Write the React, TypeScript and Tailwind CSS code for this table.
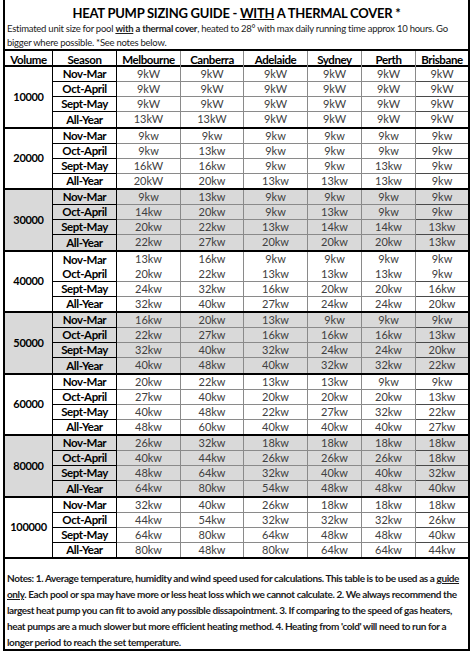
const cities = ['Melbourne', 'Canberra', 'Adelaide', 'Sydney', 'Perth', 'Brisbane'];
const seasons = ['Nov-Mar', 'Oct-April', 'Sept-May', 'All-Year'];

type Group = {
  volume: string;
  shaded: boolean;
  rows: string[][];
  // rows that have no line under them
  noLine?: number[];
};

const groups: Group[] = [
  {
    volume: '10000',
    shaded: false,
    rows: [
      ['9kW', '9kW', '9kW', '9kW', '9kW', '9kW'],
      ['9kW', '9kW', '9kW', '9kW', '9kW', '9kW'],
      ['9kW', '9kW', '9kW', '9kW', '9kW', '9kW'],
      ['13kW', '13kW', '9kW', '9kW', '9kW', '9kW'],
    ],
  },
  {
    volume: '20000',
    shaded: false,
    rows: [
      ['9kw', '9kw', '9kw', '9kw', '9kw', '9kw'],
      ['9kw', '13kw', '9kw', '9kw', '9kw', '9kw'],
      ['16kW', '16kw', '9kw', '9kw', '13kw', '9kw'],
      ['20kW', '20kw', '13kw', '13kw', '13kw', '9kw'],
    ],
  },
  {
    volume: '30000',
    shaded: true,
    rows: [
      ['9kw', '13kw', '9kw', '9kw', '9kw', '9kw'],
      ['14kw', '20kw', '9kw', '13kw', '9kw', '9kw'],
      ['20kw', '22kw', '13kw', '14kw', '14kw', '13kw'],
      ['22kw', '27kw', '20kw', '20kw', '20kw', '13kw'],
    ],
  },
  {
    volume: '40000',
    shaded: false,
    noLine: [0],
    rows: [
      ['13kw', '16kw', '9kw', '9kw', '9kw', '9kw'],
      ['20kw', '22kw', '13kw', '13kw', '13kw', '9kw'],
      ['24kw', '32kw', '16kw', '20kw', '20kw', '16kw'],
      ['32kw', '40kw', '27kw', '24kw', '24kw', '20kw'],
    ],
  },
  {
    volume: '50000',
    shaded: true,
    rows: [
      ['16kw', '20kw', '13kw', '9kw', '9kw', '9kw'],
      ['22kw', '27kw', '16kw', '16kw', '16kw', '13kw'],
      ['32kw', '40kw', '32kw', '24kw', '24kw', '20kw'],
      ['40kw', '48kw', '40kw', '32kw', '32kw', '22kw'],
    ],
  },
  {
    volume: '60000',
    shaded: false,
    rows: [
      ['20kw', '22kw', '13kw', '13kw', '9kw', '9kw'],
      ['27kw', '40kw', '20kw', '20kw', '20kw', '13kw'],
      ['40kw', '48kw', '22kw', '27kw', '32kw', '22kw'],
      ['48kw', '60kw', '40kw', '40kw', '40kw', '27kw'],
    ],
  },
  {
    volume: '80000',
    shaded: true,
    rows: [
      ['26kw', '32kw', '18kw', '18kw', '18kw', '18kw'],
      ['40kw', '44kw', '26kw', '26kw', '26kw', '18kw'],
      ['48kw', '64kw', '32kw', '40kw', '40kw', '32kw'],
      ['64kw', '80kw', '54kw', '48kw', '48kw', '40kw'],
    ],
  },
  {
    volume: '100000',
    shaded: false,
    rows: [
      ['32kw', '40kw', '26kw', '18kw', '18kw', '18kw'],
      ['44kw', '54kw', '32kw', '32kw', '32kw', '26kw'],
      ['64kw', '80kw', '64kw', '48kw', '48kw', '40kw'],
      ['80kw', '48kw', '80kw', '64kw', '64kw', '44kw'],
    ],
  },
];

const cols = 'grid grid-cols-[48px_64px_64px_63px_64px_54px_54px_52px]';

function SizeGroup({ group, index }: { group: Group; index: number }) {
  const bg = group.shaded ? 'bg-[#d9d9d9]' : 'bg-white';
  const rowsTpl = index % 2 ? 'grid-rows-[15px_15px_15px_14px]' : 'grid-rows-[15px_15px_15px_15px]';

  return (
    <div className={`${cols} ${rowsTpl} ${bg} border-t-2 border-black`}>
      <div className="row-span-4 flex items-center justify-center border-r border-black text-[11px] font-bold tracking-[-0.3px] text-black">
        {group.volume}
      </div>
      {group.rows.map((row, r) => {
        const line = r < 3 && !group.noLine?.includes(r) ? 'border-b border-[#4a4a4a]' : '';
        return [
          <div
            key={`s${r}`}
            className={`flex items-center justify-center border-r border-black text-[11.5px] font-bold tracking-[-0.4px] text-black ${line}`}
          >
            {seasons[r]}
          </div>,
          ...row.map((v, c) => (
            <div
              key={`${r}-${c}`}
              className={`flex items-center justify-center text-[11px] text-[#404040] ${line} ${
                c < 5 ? 'border-r border-[#8a8a8a]' : ''
              }`}
            >
              {v}
            </div>
          )),
        ];
      })}
    </div>
  );
}

export default function App() {
  return (
    <div className="h-[655px] w-[474px] bg-white" style={{ fontFamily: 'Lato, "Open Sans", sans-serif' }}>
      <div className="ml-[3px] w-[467px] border-x-2 border-black">
        {/* title */}
        <div className="h-[49px] px-[2px] text-black">
          <div className="pt-[4px] text-center text-[13px] font-bold leading-[18px] tracking-[-0.25px]">
            HEAT PUMP SIZING GUIDE - <span className="underline">WITH</span> A THERMAL COVER *
          </div>
          <div className="whitespace-nowrap text-[9.5px] leading-[14px] tracking-[-0.25px] text-[#222]">
            Estimated unit size for pool <span className="font-bold underline">with</span>{' '}
            <span className="font-bold">a thermal cover</span>, heated to 28° with max daily running time approx 10 hours. Go
            <br />
            bigger where possible. *See notes below.
          </div>
        </div>

        {/* header */}
        <div
          className={`${cols} h-[16px] border-t-2 border-black text-[11.5px] font-bold tracking-[-0.4px] text-black`}
        >
          <div className="flex items-center justify-center border-r border-black">Volume</div>
          <div className="flex items-center justify-center border-r border-black">Season</div>
          {cities.map((c, i) => (
            <div
              key={c}
              className={`flex items-center justify-center ${i < 5 ? 'border-r border-[#8a8a8a]' : ''}`}
            >
              {c}
            </div>
          ))}
        </div>

        {groups.map((g, i) => (
          <SizeGroup key={g.volume} group={g} index={i} />
        ))}

        {/* notes */}
        <div className="h-[94px] whitespace-nowrap border-y-2 border-black px-[2px] pt-[11px] text-[10px] font-bold leading-[16px] tracking-[-0.4px] text-[#1a1a1a]">
          <div>
            Notes: 1. Average temperature, humidity and wind speed used for calculations. This table is to be used as a{' '}
            <span className="underline">guide</span>
          </div>
          <div>
            <span className="underline">only</span>. Each pool or spa may have more or less heat loss which we cannot
            calculate. 2. We always recommend the
          </div>
          <div>
            largest heat pump you can fit to avoid any possible dissapointment. 3. If comparing to the speed of gas
            heaters,
          </div>
          <div>heat pumps are a much slower but more efficient heating method. 4. Heating from 'cold' will need to run for a</div>
          <div>longer period to reach the set temperature.</div>
        </div>
      </div>
    </div>
  );
}
